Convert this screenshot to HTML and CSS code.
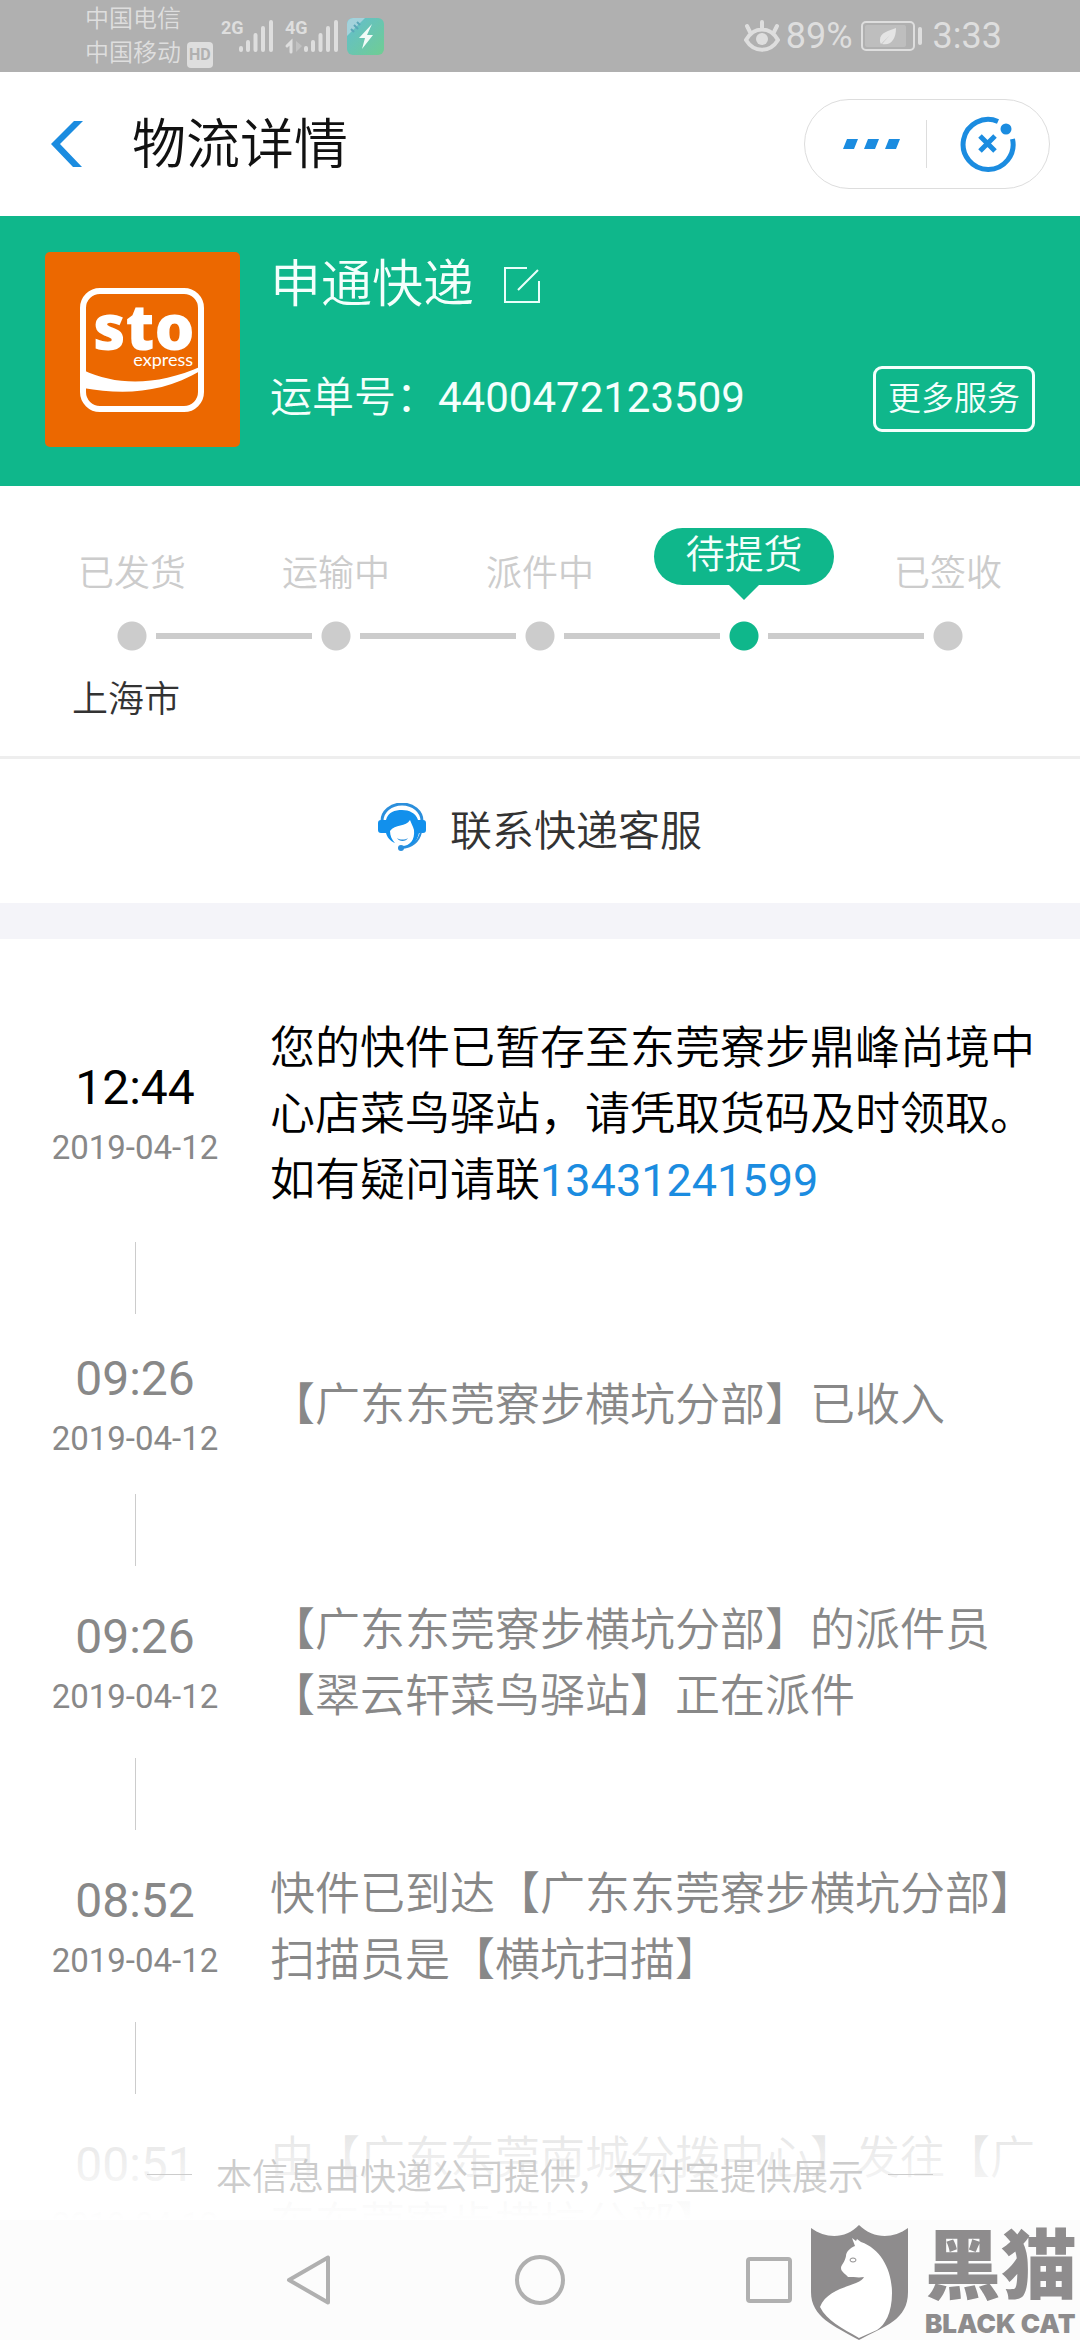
FILE: index.html
```html
<!DOCTYPE html>
<html lang="zh-CN">
<head>
    <meta charset="UTF-8">
    <meta name="viewport" content="width=device-width, initial-scale=1.0">
    <title>物流详情</title>
    <link rel="stylesheet" href="styles.css">
</head>
<body>

    <div class="status-bar">
        <div class="carriers">
            <div>中国电信</div>
            <div>中国移动 <span class="hd">HD</span></div>
        </div>
        <svg class="signals" width="120" height="36" viewBox="0 0 120 36" fill="none" stroke="#dedede" stroke-width="4" stroke-linecap="round">
            <text x="0" y="16" class="net">2G</text>
            <path d="M20 30v2M27 24v8M34.500 17v15M42 10v22M50 4v28"/>
            <text x="64" y="16" class="net">4G</text>
            <path d="M85 30v2M92 24v8M99.500 17v15M107 10v22M115 4v28"/>
            <path d="M66 28l4-4v10" stroke-width="3"/>
            <path d="M75 23v11l6-6z" fill="#c2c2c2" stroke="none"/>
        </svg>
        <svg class="app-badge" width="37" height="37" viewBox="0 0 37 37">
            <defs>
                <linearGradient id="appFill" x1="0" y1="0" x2="1" y2="1">
                    <stop offset="0" stop-color="#62bdd0"/>
                    <stop offset="1" stop-color="#70cd92"/>
                </linearGradient>
            </defs>
            <rect width="37" height="37" rx="6" fill="url(#appFill)"/>
            <path d="M0 18V6a6 6 0 0 1 6-6h12z" fill="#a3d2db"/>
            <path d="M4 11l3 3M7 7l4 4M10 4l3 3" stroke="#5ba7b8" stroke-width="2"/>
            <path d="M25 6L12 20h6l-3 11 11-14h-6z" fill="#f2fbf8"/>
        </svg>
        <div class="status-right">
            <svg width="36" height="32" viewBox="0 0 36 32" fill="none" stroke="#dedede" stroke-width="4" stroke-linecap="round">
                <path d="M2 20C10 6 26 6 34 20C26 33 10 33 2 20zM18 8V2M6 12L3 6M30 12l3-6"/>
                <circle cx="18" cy="19" r="6" fill="#dedede" stroke="none"/>
            </svg>
            <span class="percent">89%</span>
            <svg class="battery" width="62" height="30" viewBox="0 0 62 30">
                <rect x="1" y="1" width="52" height="28" rx="4" fill="none" stroke="#dedede" stroke-width="2"/>
                <rect x="4" y="4" width="41" height="22" rx="2" fill="#bebebe"/>
                <rect x="57" y="6" width="4" height="18" rx="2" fill="#dedede"/>
                <path d="M35 7C28 10 19 11 19 19c0 1 0 3 1 4l9-9-8 9c9 2 14-5 14-16z" fill="#e4e4e4"/>
            </svg>
            <span>3:33</span>
        </div>
    </div>

    <header class="header">
        <button class="back" aria-label="返回">
            <svg width="32" height="48" viewBox="0 0 32 48">
                <path d="M23 1h9L9 24l22 23h-9L0 24z" fill="#1b8ce0"/>
            </svg>
        </button>
        <h1>物流详情</h1>
        <div class="capsule">
            <button aria-label="更多">
                <svg width="58" height="10" viewBox="0 0 58 10" fill="#1b8ce0">
                    <path d="M4 0h11l-4 10H0zM25 0h11l-4 10H21zM46 0h11l-4 10H42z"/>
                </svg>
            </button>
            <button aria-label="关闭">
                <svg width="56" height="56" viewBox="0 0 56 56" fill="none" stroke="#1b8ce0" stroke-width="5">
                    <path d="M38 5.500A25 25 0 1 0 52.500 23"/>
                    <path d="M20 20l15 15M35 20L20 35"/>
                    <circle cx="46" cy="13" r="5.500" fill="#1b8ce0" stroke="none"/>
                </svg>
            </button>
        </div>
    </header>

    <section class="company">
        <svg class="logo" width="195" height="195" viewBox="0 0 195 195">
            <rect width="195" height="195" rx="5" fill="#ec6800"/>
            <rect x="38" y="39" width="118" height="118" rx="17" fill="none" stroke="#fff" stroke-width="6"/>
            <text x="48" y="98" class="logo-name">sto</text>
            <text x="148" y="114" class="logo-sub" text-anchor="end">express</text>
            <path d="M38 118C72 134 112 134 157 114v4C116 142 78 143 38 136z" fill="#fff"/>
        </svg>
        <div class="company-info">
            <div class="company-name">
                <h2>申通快递</h2>
                <button aria-label="编辑">
                    <svg width="36" height="36" viewBox="0 0 36 36" fill="none" stroke="#e9fffa" stroke-width="2">
                        <path d="M23 1H1v34h34V14M14 23L34 3"/>
                    </svg>
                </button>
            </div>
            <div class="bill">
                <span>运单号：<b>4400472123509</b></span>
                <button class="more">更多服务</button>
            </div>
        </div>
    </section>

    <ol class="steps">
        <li><span class="label">已发货</span><i></i><span class="city">上海市</span></li>
        <li><span class="label">运输中</span><i></i></li>
        <li><span class="label">派件中</span><i></i></li>
        <li class="active"><span class="label">待提货</span><i></i></li>
        <li><span class="label">已签收</span><i></i></li>
    </ol>

    <button class="service">
        <svg width="48" height="48" viewBox="0 0 48 48">
            <path d="M4 18a20 17 0 0 1 40 0" fill="none" stroke="#2b8fdc" stroke-width="3"/>
            <path d="M8 17C10 9 17 7 24 7s14 3 16 10h5c2 0 3 1 3 3v7c0 2-1 3-3 3h-4c-2 9-8 15-17 15v-2c8 0 13-6 12-16-1-4-3-7-4-10-4 7-15 4-20 11 0 5 2 9 5 12-5-2-8-6-9-10H3c-2 0-3-1-3-3v-7c0-2 1-3 3-3z" fill="#1290ec"/>
            <path d="M43 29c-2 9-9 15-20 16" fill="none" stroke="#2b8fdc" stroke-width="2"/>
            <path d="M19 35c3 2 8 2 11 0-2 4-9 4-11 0z" fill="#2b8fdc"/>
            <circle cx="23" cy="45" r="3" fill="#2b8fdc"/>
        </svg>
        联系快递客服
    </button>

    <main class="track">
        <ul>
            <li class="latest">
                <div class="when"><time>12:44</time><small>2019-04-12</small></div>
                <p>您的快件已暂存至东莞寮步鼎峰尚境中心店菜鸟驿站，请凭取货码及时领取。如有疑问请联<a href="tel:13431241599">13431241599</a></p>
            </li>
            <li>
                <div class="when"><time>09:26</time><small>2019-04-12</small></div>
                <p>【广东东莞寮步横坑分部】已收入</p>
            </li>
            <li>
                <div class="when"><time>09:26</time><small>2019-04-12</small></div>
                <p>【广东东莞寮步横坑分部】的派件员【翠云轩菜鸟驿站】正在派件</p>
            </li>
            <li>
                <div class="when"><time>08:52</time><small>2019-04-12</small></div>
                <p>快件已到达【广东东莞寮步横坑分部】扫描员是【横坑扫描】</p>
            </li>
            <li>
                <div class="when"><time>00:51</time><small>2019-04-12</small></div>
                <p>由【广东东莞南城分拨中心】发往【广东东莞寮步横坑分部】</p>
            </li>
        </ul>
        <div class="notice">本信息由快递公司提供，支付宝提供展示</div>
    </main>

    <nav class="nav-bar">
        <button aria-label="返回">
            <svg width="52" height="52" viewBox="0 0 52 52"><path d="M43 3.500v45L4 26z"/></svg>
        </button>
        <button aria-label="主页">
            <svg width="52" height="52" viewBox="0 0 52 52"><circle cx="26" cy="26" r="23"/></svg>
        </button>
        <button aria-label="任务">
            <svg width="52" height="52" viewBox="0 0 52 52"><rect x="5" y="5" width="42" height="42" rx="2"/></svg>
        </button>
    </nav>

    <div class="watermark">
        <svg width="97" height="115" viewBox="0 0 97 115">
            <path d="M0 3c15 11 35 11 48-3 14 14 34 14 49 3v64c0 28-23 34-49 48C23 101 0 92 0 67z" fill="#8e8c8d"/>
            <path d="M41 13l4 3 1-2 4 3c20 7 31 28 31 51 0 20-7 32-15 37l-18 8C31 103 16 96 9 82c6-16 27-20 36-24 5-2 7-4 8-6-5 1-10 0-16 0-2-3-7-5-7-9 0-3 4-6 5-12 0-4 4-8 9-10z" fill="#fff"/>
            <ellipse cx="42" cy="35" rx="3" ry="2" fill="none" stroke="#8e8c8d"/>
        </svg>
        <div>
            <strong>黑猫</strong>
            <em>BLACK CAT</em>
        </div>
    </div>

</body>
</html>
```

FILE: styles.css
```css
* {
    box-sizing: border-box;
}

body {
    margin: 0;
    height: 100vh;
    display: flex;
    flex-direction: column;
    position: relative;
    overflow: hidden;
    background-color: #fff;
    color: #333;
    font-family: Roboto, "Noto Sans CJK SC", sans-serif;
    font-weight: 350;
    text-spacing-trim: space-all;
}

h1, h2, p, ul, ol {
    margin: 0;
    padding: 0;
    font-weight: 350;
    list-style: none;
}

button {
    padding: 0;
    border: none;
    background: none;
    color: inherit;
    font: inherit;
    cursor: pointer;
}

svg {
    display: block;
    flex-shrink: 0;
}

/* Status bar */
.status-bar {
    flex-shrink: 0;
    height: 72px;
    padding: 0 78px 0 85px;
    display: flex;
    align-items: center;
    background-color: #b0b0b0;
    color: #dedede;
}

.carriers {
    width: 136px;
    font-size: 24px;
    line-height: 34px;
    white-space: nowrap;
}

.hd {
    display: inline-block;
    width: 26px;
    border-radius: 4px;
    background-color: #dedede;
    color: #b0b0b0;
    font-size: 16px;
    font-weight: 700;
    line-height: 26px;
    text-align: center;
    vertical-align: middle;
}

.net {
    fill: #dedede;
    stroke: none;
    font-size: 18px;
    font-weight: 700;
}

.app-badge {
    margin-left: 6px;
}

.status-right {
    margin-left: auto;
    display: flex;
    align-items: center;
    font-size: 36px;
    font-weight: 400;
}

.percent {
    margin-left: 6px;
}

.battery {
    margin: 0 10px 0 8px;
}

/* Title bar */
.header {
    flex-shrink: 0;
    height: 144px;
    padding: 0 30px 0 51px;
    display: flex;
    align-items: center;
}

.header h1 {
    margin-left: 49px;
    padding-top: 4px;
    color: #111;
    font-size: 54px;
    line-height: 72px;
}

.capsule {
    width: 246px;
    height: 90px;
    margin-left: auto;
    border: 1px solid #ddd;
    border-radius: 45px;
    display: flex;
    align-items: center;
}

.capsule button {
    flex: 1;
    height: 48px;
    display: flex;
    align-items: center;
    justify-content: center;
}

.capsule button:first-child {
    flex: 0 0 50%;
    padding-left: 12px;
    border-right: 1px solid #ddd;
}

/* Company card */
.company {
    flex-shrink: 0;
    padding: 36px 45px 39px;
    display: flex;
    gap: 30px;
    background-color: #0fb78b;
    color: #f4fffc;
}

.logo-name {
    fill: #fff;
    font-family: "Open Sans", sans-serif;
    font-size: 63px;
    font-weight: 800;
}

.logo-sub {
    fill: #fff;
    font-family: Lato, sans-serif;
    font-size: 18px;
    font-weight: 400;
}

.company-info {
    flex: 1;
}

.company-name {
    padding-top: 3px;
    display: flex;
    align-items: center;
    gap: 30px;
}

.company-name h2 {
    font-size: 51px;
    line-height: 60px;
}

.bill {
    margin-top: 51px;
    display: flex;
    align-items: center;
    justify-content: space-between;
    font-size: 42px;
    line-height: 60px;
}

.bill span {
    padding-bottom: 3px;
}

.bill b {
    font-weight: 400;
}

.more {
    width: 162px;
    height: 66px;
    border: 3px solid #f4fffc;
    border-radius: 9px;
    font-size: 33px;
    line-height: 54px;
}

/* Delivery steps */
.steps {
    flex-shrink: 0;
    height: 273px;
    padding: 42px 30px 0;
    border-bottom: 3px solid #eee;
    display: grid;
    grid-template-columns: repeat(5, 1fr);
    font-size: 36px;
    line-height: 48px;
}

.steps li {
    display: flex;
    flex-direction: column;
    align-items: center;
}

.steps .label {
    margin: 22px 0 23px;
    color: #ccc;
}

/* the dot is the background, the half lines sit on both sides of it */
.steps i {
    width: 100%;
    height: 30px;
    display: flex;
    align-items: center;
    gap: 48px;
    background: radial-gradient(circle at center, #ccc 14px, transparent 15px);
}

.steps i::before,
.steps i::after {
    content: "";
    flex: 1;
    height: 6px;
    background-color: #ccc;
}

.steps li:first-child i::before,
.steps li:last-child i::after {
    visibility: hidden;
}

.steps .active i {
    background: radial-gradient(circle at center, #0fb78b 14px, transparent 15px);
}

.steps .active .label {
    position: relative;
    width: 180px;
    height: 57px;
    margin: 0 0 36px;
    border-radius: 29px;
    background-color: #0fb78b;
    color: #f4fffc;
    font-size: 39px;
    line-height: 54px;
    text-align: center;
}

.steps .active .label::after {
    content: "";
    position: absolute;
    top: 100%;
    left: 50%;
    margin-left: -15px;
    border: 15px solid transparent;
    border-top-color: #0fb78b;
    border-bottom: none;
}

.city {
    margin: 25px 12px 0 0;
}

/* Customer service */
.service {
    flex-shrink: 0;
    height: 180px;
    padding-bottom: 8px;
    border-bottom: 36px solid #f4f4f9;
    display: flex;
    align-items: center;
    justify-content: center;
    gap: 24px;
    font-size: 42px;
}

/* Tracking list */
.track {
    flex: 1;
    min-height: 0;
    padding-top: 45px;
    position: relative;
    overflow: hidden;
}

.track li {
    padding: 32px 45px 28px 0;
    display: flex;
    align-items: center;
    color: #888;
}

.track li + li {
    margin-top: 72px;
    position: relative;
}

.track li + li::before {
    content: "";
    position: absolute;
    top: -72px;
    left: 135px;
    width: 1px;
    height: 72px;
    background-color: #ccc;
}

.when {
    width: 270px;
    flex-shrink: 0;
    text-align: center;
    font-weight: 400;
}

.when time,
.when small {
    display: block;
    font-size: 48px;
    line-height: 66px;
}

.when small {
    font-size: 33px;
    line-height: 54px;
}

.track p {
    flex: 1;
    font-size: 45px;
    line-height: 66px;
}

.track .latest time,
.track .latest p {
    color: #000;
}

.track a {
    color: #1b8ce0;
    font-weight: 400;
    text-decoration: none;
}

.notice {
    position: absolute;
    left: 0;
    right: 0;
    bottom: 0;
    height: 108px;
    padding-top: 16px;
    display: flex;
    align-items: center;
    justify-content: center;
    gap: 24px;
    background: linear-gradient(rgba(255, 255, 255, 0.75), #fff);
    color: #ccc;
    font-size: 36px;
}

.notice::before,
.notice::after {
    content: "";
    width: 45px;
    height: 1px;
    background-color: #ccc;
}

/* System navigation */
.nav-bar {
    flex-shrink: 0;
    height: 120px;
    display: flex;
    align-items: center;
    justify-content: center;
    gap: 177px;
    background-color: #fcfcfc;
}

.nav-bar svg {
    fill: none;
    stroke: #b0b0b0;
    stroke-width: 4px;
    stroke-linejoin: round;
}

.watermark {
    position: absolute;
    right: 3px;
    bottom: 0;
    display: flex;
    gap: 17px;
    color: #8e8c8d;
}

.watermark strong,
.watermark em {
    display: block;
    font-size: 76px;
    font-style: normal;
    font-weight: 900;
    line-height: 84px;
}

.watermark em {
    font-family: Inter, sans-serif;
    font-size: 26px;
    line-height: 30px;
}
```
